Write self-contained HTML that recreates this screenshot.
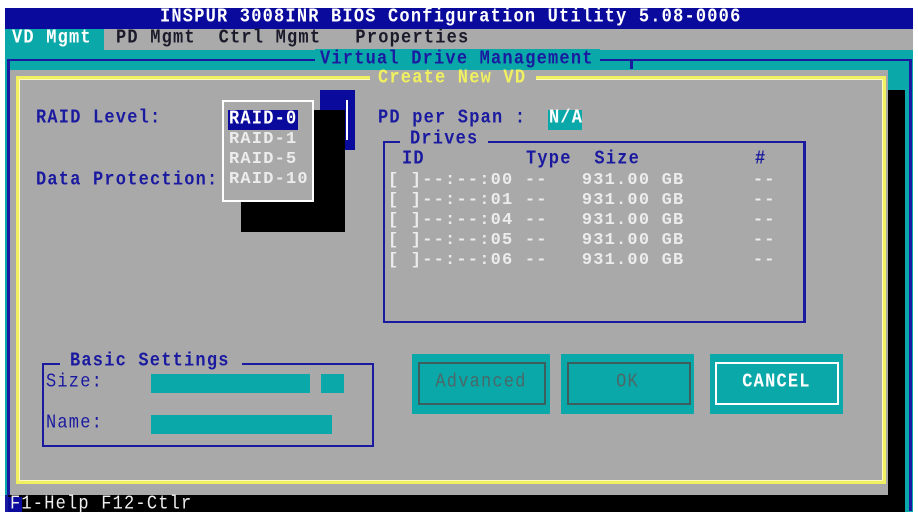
<!DOCTYPE html>
<html><head><style>
*{margin:0;padding:0}
body{width:918px;height:516px;background:#fff;position:relative;overflow:hidden;font-family:"Liberation Mono",monospace;font-size:17px;font-weight:bold;letter-spacing:1.2px}
div{position:absolute}
.t{line-height:20px;white-space:pre;transform:scaleY(1.15);transform-origin:50% 50%}
.db{color:#1a1aa0}
.lt{color:#ececec}
</style></head><body>
<div style="left:5px;top:8px;width:908px;height:21px;background:#0a0a9c"></div>
<div class="t" style="left:160px;top:8px;color:#fff">INSPUR 3008INR BIOS Configuration Utility 5.08-0006</div>
<div style="left:5px;top:29px;width:908px;height:21px;background:#aaa"></div>
<div style="left:5px;top:29px;width:99px;height:21px;background:#0aa8a8"></div>
<div class="t" style="left:12px;top:29px;color:#fff">VD Mgmt</div>
<div class="t" style="left:116px;top:29px;color:#1a1a2a">PD Mgmt  Ctrl Mgmt   Properties</div>
<div style="left:5px;top:50px;width:908px;height:462px;background:#0aa8a8"></div>
<div style="left:7px;top:59px;width:899px;height:450px;border-left:3px solid #1a1aa0;border-top:2px solid #1a1aa0;border-right:3px solid #1a1aa0"></div>
<div style="left:630px;top:59px;width:3px;height:10px;background:#1a1aa0"></div>
<div style="left:315px;top:49px;width:285px;height:22px;background:#0aa8a8"></div>
<div class="t db" style="left:320px;top:50px">Virtual Drive Management</div>
<div style="left:888px;top:90px;width:17px;height:422px;background:#000"></div>
<div style="left:5px;top:495px;width:900px;height:17px;background:#000"></div>
<div style="left:5px;top:495px;width:3px;height:17px;background:#1a1aa0"></div>
<div style="left:10px;top:70px;width:878px;height:425px;background:#a9a9a9"></div>
<div style="left:16px;top:76px;width:864px;height:402px;border:3px solid #f0f060;box-shadow:inset 0 0 0 1px #fff8c0"></div>
<div style="left:370px;top:70px;width:166px;height:20px;background:#a9a9a9"></div>
<div class="t" style="left:378px;top:69px;color:#f0f060">Create New VD</div>
<div class="t db" style="left:36px;top:109px">RAID Level:</div>
<div class="t db" style="left:36px;top:171px">Data Protection:</div>
<div style="left:320px;top:90px;width:35px;height:60px;background:#0a0a9c"></div>
<div style="left:313px;top:110px;width:32px;height:122px;background:#000"></div>
<div style="left:241px;top:200px;width:104px;height:32px;background:#000"></div>
<div style="left:346px;top:100px;width:2px;height:40px;background:#fff"></div>
<div style="left:222px;top:100px;width:88px;height:98px;border:2px solid #fff;background:#a9a9a9"></div>
<div style="left:228px;top:110px;width:70px;height:20px;background:#0a0a9c"></div>
<div class="t" style="left:229px;top:110px;color:#fff">RAID-0</div>
<div class="t lt" style="left:229px;top:130px;transform:none">RAID-1
RAID-5
RAID-10</div>
<div class="t db" style="left:378px;top:109px">PD per Span :</div>
<div style="left:548px;top:110px;width:34px;height:20px;background:#0aa8a8"></div>
<div class="t" style="left:549px;top:109px;color:#fff">N/A</div>
<div style="left:383px;top:141px;width:418px;height:178px;border:2px solid #1a1aa0;border-right-width:3px"></div>
<div style="left:400px;top:131px;width:88px;height:20px;background:#a9a9a9"></div>
<div class="t db" style="left:410px;top:130px">Drives</div>
<div class="t db" style="left:402px;top:150px">ID</div>
<div class="t db" style="left:526px;top:150px">Type  Size</div>
<div class="t db" style="left:755px;top:150px">#</div>
<div class="t lt" style="left:388px;top:171px;transform:none">[ ]--:--:00 --   931.00 GB      --
[ ]--:--:01 --   931.00 GB      --
[ ]--:--:04 --   931.00 GB      --
[ ]--:--:05 --   931.00 GB      --
[ ]--:--:06 --   931.00 GB      --</div>
<div style="left:42px;top:363px;width:328px;height:80px;border:2px solid #1a1aa0"></div>
<div style="left:60px;top:352px;width:182px;height:20px;background:#a9a9a9"></div>
<div class="t db" style="left:70px;top:352px">Basic Settings</div>
<div class="t db" style="left:46px;top:373px;font-weight:normal">Size:</div>
<div class="t db" style="left:46px;top:414px;font-weight:normal">Name:</div>
<div style="left:151px;top:374px;width:159px;height:19px;background:#0aa8a8"></div>
<div style="left:321px;top:374px;width:23px;height:19px;background:#0aa8a8"></div>
<div style="left:151px;top:415px;width:181px;height:19px;background:#0aa8a8"></div>
<div style="left:412px;top:354px;width:138px;height:60px;background:#0aa8a8"></div>
<div style="left:418px;top:362px;width:124px;height:39px;border:2px solid #3e5e5e"></div>
<div class="t" style="left:412px;top:373px;width:138px;text-align:center;color:#4a6868;font-weight:normal">Advanced</div>
<div style="left:561px;top:354px;width:133px;height:60px;background:#0aa8a8"></div>
<div style="left:567px;top:362px;width:120px;height:39px;border:2px solid #3e5e5e"></div>
<div class="t" style="left:561px;top:373px;width:133px;text-align:center;color:#4a6868;font-weight:normal">OK</div>
<div style="left:710px;top:354px;width:133px;height:60px;background:#0aa8a8"></div>
<div style="left:715px;top:362px;width:120px;height:39px;border:2px solid #fff"></div>
<div class="t" style="left:710px;top:373px;width:133px;text-align:center;color:#fff">CANCEL</div>
<div style="left:8px;top:497px;width:14px;height:15px;background:#0a0a9c"></div>
<div class="t" style="left:10px;top:495px;color:#eee;font-weight:normal">F1-Help F12-Ctlr</div>
</body></html>
